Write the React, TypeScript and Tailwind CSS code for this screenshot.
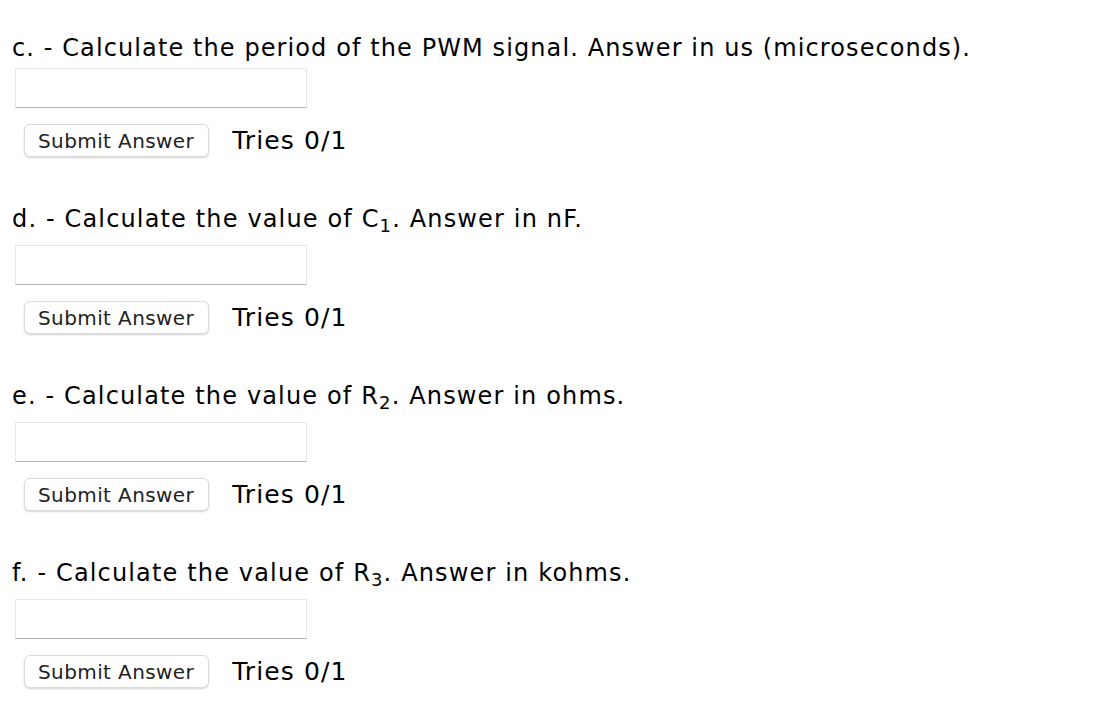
const questions = [
  { label: "c.", text: "Calculate the period of the PWM signal. Answer in us (microseconds)." },
  { label: "d.", pre: "Calculate the value of C", sub: "1", post: ". Answer in nF." },
  { label: "e.", pre: "Calculate the value of R", sub: "2", post: ". Answer in ohms." },
  { label: "f.", pre: "Calculate the value of R", sub: "3", post: ". Answer in kohms." },
];

type Q = { label: string; text?: string; pre?: string; sub?: string; post?: string };

function Question({ q }: { q: Q }) {
  // headings with a subscript sit a little higher above their input
  const hasSub = !q.text;
  return (
    <div className="h-[177px]">
      <p
        className={
          hasSub
            ? "text-[24px] leading-[28px] tracking-[1.15px] text-black pl-[12px] pt-[28px] pb-[6px]"
            : "text-[24px] leading-[28px] tracking-[1.1px] text-black pl-[12px] pt-[34px]"
        }
      >
        {q.label} -{" "}
        {q.text ?? (
          <>
            {q.pre}
            <sub className="text-[18px]">{q.sub}</sub>
            {q.post}
          </>
        )}
      </p>
      <input
        type="text"
        className="block ml-[15px] mt-[6px] w-[292px] h-[40px] border border-[#e8e8e8] border-b-[#b5b5b5] bg-white outline-none"
      />
      <div className="flex items-center ml-[24px] mt-[14px] gap-[23px]">
        <button className="h-[33px] pl-[13px] pr-[14px] text-[20px] tracking-[0.4px] text-[#222] bg-white border border-[#dcdcdc] rounded-[6px] shadow-[0_1px_2px_rgba(0,0,0,0.18)]">
          Submit Answer
        </button>
        <span className="text-[25px] tracking-[1.1px] text-black">Tries 0/1</span>
      </div>
    </div>
  );
}

export default function App() {
  return (
    <div className="w-[1112px] h-[728px] bg-white font-['DejaVu_Sans',Verdana,sans-serif] overflow-hidden">
      {questions.map((q) => (
        <Question key={q.label} q={q} />
      ))}
    </div>
  );
}
